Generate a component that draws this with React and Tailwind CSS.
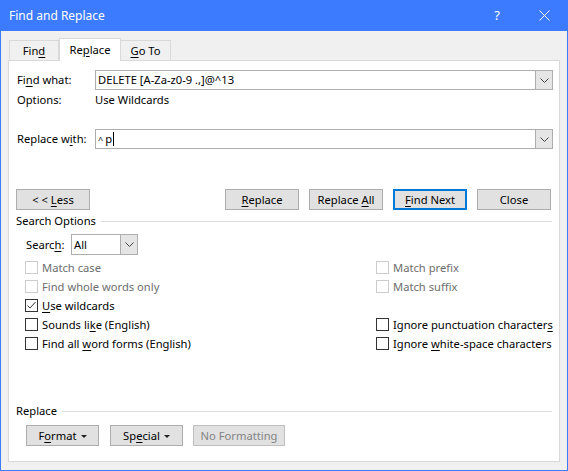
import React from 'react';

const U = ({ children }) => <span className="underline underline-offset-[2px]">{children}</span>;

const Chevron = () => (
  <svg width="9" height="5" viewBox="0 0 9 5" className="block">
    <polyline points="0.5,0.5 4.5,4.5 8.5,0.5" fill="none" stroke="#444" strokeWidth="1" />
  </svg>
);

const Caret = () => (
  <svg width="6" height="3" viewBox="0 0 6 3" className="inline-block ml-[4px] align-middle">
    <polygon points="0,0 6,0 3,3" fill="#222" />
  </svg>
);

const Btn = ({ children, w = 'w-[74px]', className = '', focused = false, disabled = false }) => (
  <div
    className={`${w} h-[21px] flex items-center justify-center bg-[#e1e1e1] shrink-0 ${
      focused ? 'border-2 border-[#0078d7]' : disabled ? 'border border-[#bfbfbf]' : 'border border-[#adadad]'
    } ${disabled ? 'text-[#838383]' : 'text-black'} ${className}`}
  >
    <span className="whitespace-pre">{children}</span>
  </div>
);

const Check = ({ label, checked = false, disabled = false }) => (
  <div className="flex items-center h-[19px] whitespace-nowrap">
    <div
      className={`w-[13px] h-[13px] shrink-0 bg-white border flex items-center justify-center ${
        disabled ? 'border-[#cccccc]' : 'border-[#333333]'
      }`}
    >
      {checked && (
        <svg width="11" height="11" viewBox="0 0 11 11" className="block">
          <polyline points="1.5,5.5 4,8 9.5,2" fill="none" stroke="#333" strokeWidth="1" />
        </svg>
      )}
    </div>
    <span className={`ml-[4px] ${disabled ? 'text-[#6d6d6d]' : 'text-black'}`}>{label}</span>
  </div>
);

const Combo = ({ value, w, className = '' }) => (
  <div className={`${w} h-[20px] flex border border-[#adadad] bg-white shrink-0 ${className}`}>
    <div className="flex-1 flex items-center pl-[2px] whitespace-pre">{value}</div>
    <div className="w-[17px] bg-[#e5e5e5] border-l border-[#adadad] flex items-center justify-center">
      <Chevron />
    </div>
  </div>
);

export default function App() {
  return (
    <div
      className="w-[568px] h-[471px] bg-[#f0f0f0] flex flex-col text-[11.2px] leading-none text-black select-none"
      style={{ fontFamily: '"Noto Sans", "Open Sans", sans-serif' }}
    >
      {/* Title bar */}
      <div className="h-[31px] bg-[#3c7bfd] flex items-center text-white shrink-0">
        <span className="ml-[9px] text-[12px]">Find and Replace</span>
        <span className="ml-auto mr-[39px] text-[13px]">?</span>
        <svg width="11" height="11" viewBox="0 0 11 11" className="mr-[18px]">
          <line x1="0.5" y1="0.5" x2="10.5" y2="10.5" stroke="white" strokeWidth="1" />
          <line x1="10.5" y1="0.5" x2="0.5" y2="10.5" stroke="white" strokeWidth="1" />
        </svg>
      </div>

      <div className="flex-1 border-x border-b border-[#3c7bfd] flex flex-col">
        {/* Tabs */}
        <div className="mt-[7px] ml-[8px] h-[22px] flex items-end">
          <div className="w-[50px] h-[20px] border border-[#d9d9d9] border-b-0 flex items-center justify-center">
            <span>Fin<U>d</U></span>
          </div>
          <div className="relative z-10 -mb-px w-[62px] h-[23px] bg-white border border-[#d9d9d9] border-b-0 flex items-center justify-center pb-[1px]">
            <span>Re<U>p</U>lace</span>
          </div>
          <div className="w-[50px] h-[20px] border border-[#d9d9d9] border-b-0 border-l-0 flex items-center justify-center">
            <span className="whitespace-pre"><U>G</U>o To</span>
          </div>
        </div>

        {/* Panel */}
        <div className="ml-[7px] w-[552px] h-[402px] bg-white border border-[#d9d9d9] flex flex-col">
          <div className="mt-[9px] h-[20px] flex items-center">
            <span className="pl-[8px] w-[86px] shrink-0">Fi<U>n</U>d what:</span>
            <Combo value="DELETE [A-Za-z0-9 .,]@^13" w="w-[458px]" />
          </div>
          <div className="h-[20px] flex items-center">
            <span className="pl-[8px] w-[86px] shrink-0">Options:</span>
            <span>Use Wildcards</span>
          </div>
          <div className="mt-[19px] h-[20px] flex items-center">
            <span className="pl-[8px] w-[86px] shrink-0">Replace w<U>i</U>th:</span>
            <Combo
              value={
                <span className="flex items-center">
                  <span className="text-[9px] mr-[2px]">^</span>p<span className="w-px h-[14px] bg-black ml-[1px]" />
                </span>
              }
              w="w-[458px]"
            />
          </div>

          {/* Buttons */}
          <div className="mt-[40px] flex">
            <Btn w="w-[74px]" className="ml-[7px]">
              {'< < '}<U>L</U>ess
            </Btn>
            <Btn className="ml-[135px]">
              <U>R</U>eplace
            </Btn>
            <Btn className="ml-[10px]">
              {'Replace '}<U>A</U>ll
            </Btn>
            <Btn className="ml-[10px]" focused>
              <U>F</U>ind Next
            </Btn>
            <Btn className="ml-[10px]">Close</Btn>
          </div>

          {/* Search Options */}
          <div className="mt-[3px] h-[16px] flex items-center">
            <span className="pl-[7px]">Search Options</span>
            <div className="flex-1 h-px bg-[#dcdcdc] ml-[5px] mr-[7px]" />
          </div>
          <div className="mt-[5px] h-[21px] flex items-center">
            <span className="pl-[17px] w-[62px] shrink-0">
              Searc<U>h</U>:
            </span>
            <Combo value="All" w="w-[67px]" className="h-[21px]" />
          </div>

          <div className="mt-[3px] flex">
            <div className="pl-[16px] w-[367px] shrink-0 flex flex-col">
              <Check label="Match case" disabled />
              <Check label="Find whole words only" disabled />
              <Check label={<><U>U</U>se wildcards</>} checked />
              <Check label={<>Sounds li<U>k</U>e (English)</>} />
              <Check label={<>Find all <U>w</U>ord forms (English)</>} />
            </div>
            <div className="flex flex-col">
              <Check label="Match prefix" disabled />
              <Check label="Match suffix" disabled />
              <div className="h-[19px]" />
              <Check label={<>Ignore punctuation character<U>s</U></>} />
              <Check label={<>Ignore <U>w</U>hite-space characters</>} />
            </div>
          </div>

          {/* Replace */}
          <div className="mt-[50px] h-[16px] flex items-center">
            <span className="pl-[7px]">Replace</span>
            <div className="flex-1 h-px bg-[#dcdcdc] ml-[5px] mr-[7px]" />
          </div>
          <div className="mt-[6px] flex">
            <Btn w="w-[73px]" className="ml-[17px]">
              F<U>o</U>rmat<Caret />
            </Btn>
            <Btn w="w-[73px]" className="ml-[11px]">
              Sp<U>e</U>cial<Caret />
            </Btn>
            <Btn w="w-[92px]" className="ml-[10px]" disabled>
              No Formatting
            </Btn>
          </div>
        </div>
      </div>
    </div>
  );
}
